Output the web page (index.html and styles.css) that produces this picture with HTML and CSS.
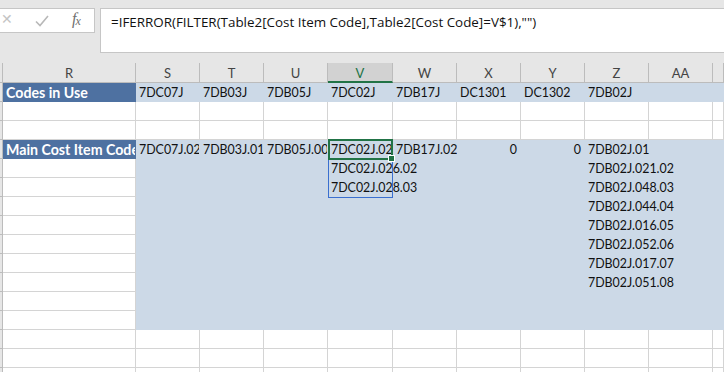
FILE: index.html
```
<!DOCTYPE html>
<html lang="en">
<head>
    <meta charset="UTF-8">
    <title>Cost Codes</title>
    <link rel="stylesheet" href="styles.css">
</head>
<body>
    <div class="toolbar">
        <div class="actions">
            <span class="icon cancel">&#x2715;</span>
            <svg class="icon enter" width="14" height="12" viewBox="0 0 14 12"><path d="M1 6.5 L5 10.5 L13 1" fill="none" stroke="#b8b8b8" stroke-width="1.6"/></svg>
            <span class="icon fx">f<sub>x</sub></span>
        </div>
        <div class="formula">=IFERROR(FILTER(Table2[Cost Item Code],Table2[Cost Code]=V$1),"")</div>
    </div>

    <div class="sheet" id="sheet">
        <div class="select-box"></div>
        <div class="spill-box"></div>
    </div>

    <script>
        const cols = ['', 'R', 'S', 'T', 'U', 'V', 'W', 'X', 'Y', 'Z', 'AA', ''];

        // row number -> { column: value }
        const data = {
            1: { R: 'Codes in Use', S: '7DC07J', T: '7DB03J', U: '7DB05J', V: '7DC02J', W: '7DB17J', X: 'DC1301', Y: 'DC1302', Z: '7DB02J' },
            4: { R: 'Main Cost Item Codes', S: '7DC07J.02', T: '7DB03J.01', U: '7DB05J.001', V: '7DC02J.02', W: '7DB17J.02', X: 0, Y: 0, Z: '7DB02J.01' },
            5: { V: '7DC02J.026.02', Z: '7DB02J.021.02' },
            6: { V: '7DC02J.028.03', Z: '7DB02J.048.03' },
            7: { Z: '7DB02J.044.04' },
            8: { Z: '7DB02J.016.05' },
            9: { Z: '7DB02J.052.06' },
            10: { Z: '7DB02J.017.07' },
            11: { Z: '7DB02J.051.08' }
        };

        const sheet = document.getElementById('sheet');

        function addCell(cls, text) {
            const cell = document.createElement('div');
            cell.className = cls;
            if (text !== undefined) cell.textContent = text;
            sheet.appendChild(cell);
            return cell;
        }

        // column headers
        cols.forEach(c => addCell(c === 'V' ? 'head active' : 'head', c));

        for (let r = 1; r <= 16; r++) {
            const row = data[r] || {};
            const filled = r === 1 || (r >= 4 && r <= 13);
            cols.forEach((c, i) => {
                if (i === 0) { addCell('rownum'); return; }
                let cls = 'cell';
                if (c === 'R' && (r === 1 || r === 4)) cls += ' label';
                else if (i > 1 && filled) cls += ' fill';
                const value = row[c];
                if (typeof value === 'number') cls += ' num';
                // text may run into the empty cell next to it
                if (value !== undefined && !row[cols[i + 1]]) cls += ' spill';
                addCell(cls, value);
            });
        }
    </script>
</body>
</html>
```

FILE: styles.css
```
body {
    margin: 0;
    background: #e6e6e6;
    font-family: Lato, "Liberation Sans", sans-serif;
    overflow: hidden;
}
.toolbar {
    display: flex;
    gap: 5px;
    height: 63px;
    padding-top: 8px;
    box-sizing: border-box;
}
.actions {
    width: 95px;
    height: 25px;
    background: #fff;
    border: 1px solid #c6c6c6;
    border-left: none;
    box-sizing: border-box;
    position: relative;
}
.icon {
    position: absolute;
    top: 2px;
    font-family: "DejaVu Sans", sans-serif;
}
.cancel {
    left: 1px;
    font-size: 14px;
    color: #c4c4c4;
}
.enter {
    left: 35px;
    top: 6px;
}
.fx {
    left: 72px;
    top: 1px;
    font-family: "Liberation Serif", serif;
    font-style: italic;
    font-size: 16px;
    color: #707070;
}
.fx sub {
    font-size: 12px;
    vertical-align: -1px;
    margin-left: -1px;
}
.formula {
    flex: 1;
    height: 45px;
    background: #fff;
    border: 1px solid #c6c6c6;
    border-right: none;
    box-sizing: border-box;
    padding: 4px 0 0 10px;
    font-family: "Open Sans", sans-serif;
    font-size: 13.4px;
    color: #111;
    white-space: nowrap;
}
.sheet {
    position: relative;
    display: grid;
    grid-template-columns: 3px 133px 64px 64px 64px 65px 64px 64px 64px 64px 64px 1fr;
    grid-template-rows: 20px;
    grid-auto-rows: 19px;
    background: #fff;
    font-size: 12.4px;
}
.head {
    background: #e6e6e6;
    border-right: 1px solid #bcbcbc;
    border-bottom: 1px solid #bcbcbc;
    color: #444;
    font-size: 13px;
    text-align: center;
    line-height: 20px;
}
.head.active {
    background: #d2d2d2;
    color: #217346;
    border-bottom: 2px solid #217346;
}
.rownum {
    background: #e6e6e6;
    border-right: 1px solid #bcbcbc;
    border-bottom: 1px solid #bcbcbc;
}
.cell {
    border-right: 1px solid #d4d4d4;
    border-bottom: 1px solid #d4d4d4;
    padding: 1px 2px 0 3px;
    line-height: 18px;
    white-space: nowrap;
    overflow: hidden;
    color: #111;
}
.cell.spill {
    overflow: visible;
    position: relative;
    z-index: 1;
}
.cell.fill {
    background: #ccd9e7;
    border-color: #ccd9e7;
}
.cell.label {
    background: #4e71a1;
    border-color: #4e71a1;
    color: #fff;
    font-weight: bold;
    font-size: 14.2px;
    padding-left: 3px;
}
.cell.num {
    text-align: right;
    padding-right: 3px;
}
.select-box {
    position: absolute;
    left: 328px;
    top: 76px;
    width: 65px;
    height: 21px;
    border: 2px solid #217346;
    box-sizing: border-box;
    z-index: 3;
}
.select-box::after {
    content: "";
    position: absolute;
    right: -4px;
    bottom: -4px;
    width: 5px;
    height: 5px;
    background: #217346;
    border: 1px solid #fff;
}
.spill-box {
    position: absolute;
    left: 328px;
    top: 77px;
    width: 65px;
    height: 58px;
    border: 1px solid #3a6fcf;
    box-sizing: border-box;
    z-index: 2;
}
```
